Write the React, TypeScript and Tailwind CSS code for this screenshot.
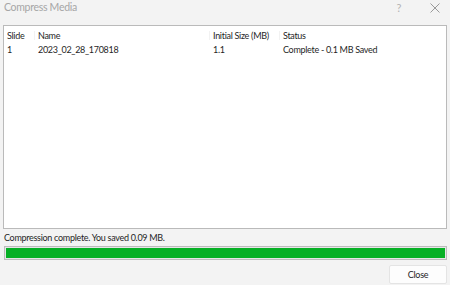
import React from "react";

type Row = {
  slide: string;
  name: string;
  size: string;
  status: string;
};

const rows: Row[] = [
  { slide: "1", name: "2023_02_28_170818", size: "1.1", status: "Complete - 0.1 MB Saved" },
];

const App = () => {
  return (
    <div
      className="w-[450px] h-[285px] bg-[#f3f3f3] text-[#1f1f1f] flex flex-col overflow-hidden tracking-[-0.3px]"
      style={{ fontFamily: 'Lato, "Open Sans", sans-serif' }}
    >
      {/* title bar */}
      <div className="h-[15px] flex items-center justify-between pl-[4px] pr-[10px]">
        <span className="text-[10.5px] leading-[15px] text-[#a6a6a6]">Compress Media</span>
        <div className="flex items-center gap-[29px] text-[#b4b4b4]">
          <span className="text-[11px] leading-[15px]">?</span>
          <svg width="10" height="10" viewBox="0 0 10 10" stroke="#9a9a9a" strokeWidth="1">
            <path d="M0.5 0.5L9.5 9.5M9.5 0.5L0.5 9.5" />
          </svg>
        </div>
      </div>

      {/* list */}
      <div className="mt-[10px] ml-[3px] mr-[3px] h-[204px] bg-white border border-[#bababa] text-[9px] leading-none">
        <div className="flex h-[18px] items-center whitespace-nowrap">
          <div className="w-[31px] pl-[3px] border-r border-[#f2f2f2]">Slide</div>
          <div className="w-[175px] pl-[3px] border-r border-[#f2f2f2]">Name</div>
          <div className="w-[70px] pl-[3px] border-r border-[#f2f2f2]">Initial Size (MB)</div>
          <div className="flex-1 pl-[3px]">Status</div>
        </div>
        {rows.map((r) => (
          <div key={r.slide} className="flex h-[11px] items-center whitespace-nowrap">
            <div className="w-[31px] pl-[3px]">{r.slide}</div>
            <div className="w-[175px] pl-[3px]">{r.name}</div>
            <div className="w-[70px] pl-[3px]">{r.size}</div>
            <div className="flex-1 pl-[3px]">{r.status}</div>
          </div>
        ))}
      </div>

      {/* status */}
      <div className="px-[4px] mt-[2px] text-[9px] leading-[14px]">
        Compression complete. You saved 0.09 MB.
      </div>

      {/* progress */}
      <div className="ml-[4px] mr-[3px] mt-[1px] h-[14px] border border-[#bcbcbc] bg-[#e6e6e6] p-[1px]">
        <div className="h-full bg-[#06b025]" style={{ width: "100%" }} />
      </div>

      {/* footer */}
      <div className="flex justify-end pr-[3px] mt-[5px]">
        <button className="w-[58px] h-[19px] bg-[#fdfdfd] border border-[#e4e4e4] rounded-[2px] text-[9px] text-[#1f1f1f]">
          Close
        </button>
      </div>
    </div>
  );
};

export default App;
